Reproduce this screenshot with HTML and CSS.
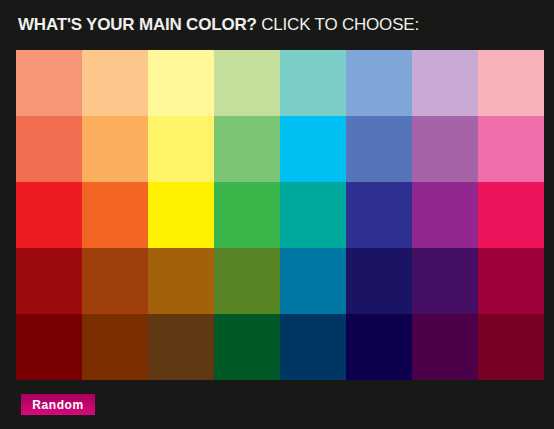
FILE: index.html
```html
<!DOCTYPE html>
<html lang="en">
<head>
    <meta charset="UTF-8">
    <meta name="viewport" content="width=device-width, initial-scale=1.0">
    <title>Choose Color</title>
    <link rel="stylesheet" href="styles.css">
</head>
<body>
    <div class="picker">
        <h1><strong>WHAT'S YOUR MAIN COLOR?</strong> CLICK TO CHOOSE:</h1>
        <div class="swatches" id="swatches"></div>
        <button type="button" class="random-btn" id="random">Random</button>
    </div>

    <script>
        const colors = [
            '#f69679', '#fdc68a', '#fff79a', '#c4df9b', '#7bcdc8', '#7ea7d8', '#c8aad4', '#f8b0b9',
            '#f26c4f', '#fbaf5c', '#fff467', '#7cc576', '#00bff3', '#5574b9', '#a763a8', '#f06ea9',
            '#ed1c24', '#f26522', '#fff200', '#39b54a', '#00a99d', '#2e3192', '#92278f', '#ed145b',
            '#9e0b0f', '#a0410d', '#a3620a', '#598527', '#0076a3', '#1b1464', '#440e62', '#9e0039',
            '#790000', '#7b2e00', '#603913', '#005826', '#003663', '#0d004c', '#4b0049', '#7a0026'
        ];

        const grid = document.getElementById('swatches');
        colors.forEach(color => {
            const cell = document.createElement('div');
            cell.className = 'swatch';
            cell.style.backgroundColor = color;
            cell.addEventListener('click', () => console.log('picked', color));
            grid.appendChild(cell);
        });

        document.getElementById('random').addEventListener('click', function() {
            const pick = colors[Math.floor(Math.random() * colors.length)];
            console.log('random', pick);
        });
    </script>
</body>
</html>
```

FILE: styles.css
```css
body {
    margin: 0;
    padding: 0;
    background-color: #181816;
    font-family: "Liberation Sans", Arial, sans-serif;
}
.picker {
    padding: 0 10px 14px 16px;
}
h1 {
    margin: 15px 0 15px 2px;
    font-size: 17px;
    line-height: 20px;
    font-weight: normal;
    color: #efefef;
    letter-spacing: -0.2px;
}
h1 strong {
    font-weight: bold;
}
.swatches {
    display: grid;
    grid-template-columns: repeat(8, 66px);
    grid-auto-rows: 66px;
}
.swatch {
    cursor: pointer;
}
.random-btn {
    display: block;
    margin: 14px 0 0 5px;
    width: 74px;
    height: 21px;
    padding: 0;
    border: none;
    background: linear-gradient(#a6005c, #d8097d);
    color: #fff;
    font-family: "Liberation Sans", Arial, sans-serif;
    font-size: 12px;
    font-weight: bold;
    letter-spacing: 0.6px;
    cursor: pointer;
}
```
